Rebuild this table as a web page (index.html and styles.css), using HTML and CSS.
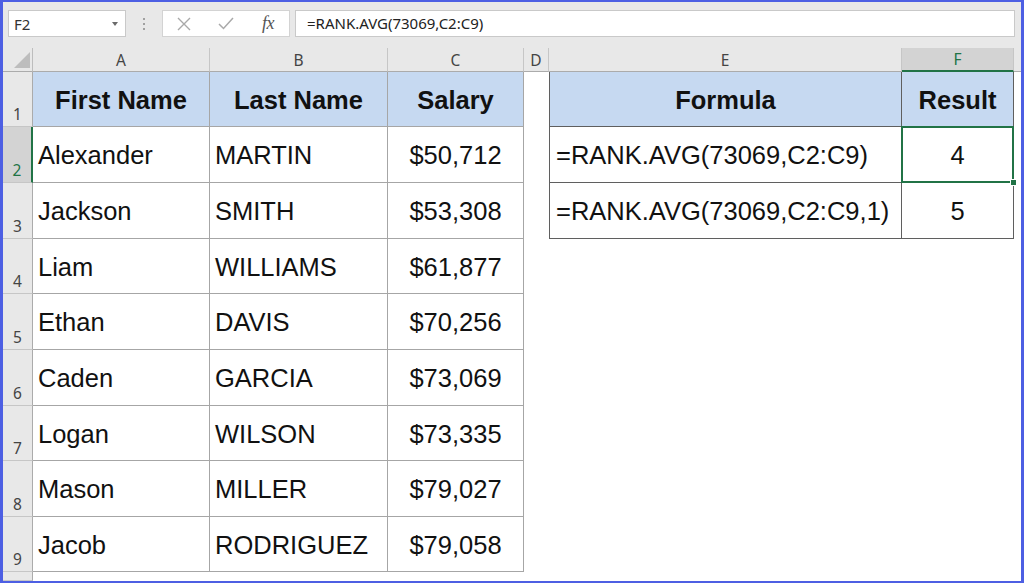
FILE: index.html
```html
<!DOCTYPE html>
<html>
<head>
<meta charset="utf-8">
<link rel="stylesheet" href="styles.css">
</head>
<body>
<div class="frame">
  <div class="toolbar">
    <div class="namebox"><span>F2</span><span class="caret"></span></div>
    <div class="grip"><i></i><i></i><i></i></div>
    <div class="fbuttons">
      <span class="fbtn"><svg width="14" height="14" viewBox="0 0 14 14"><path d="M1 1 L13 13 M13 1 L1 13" stroke="#a9a9a9" stroke-width="1.4" fill="none"/></svg></span>
      <span class="fbtn"><svg width="16" height="13" viewBox="0 0 16 13"><path d="M1 7 L5.5 11.5 L15 1" stroke="#a9a9a9" stroke-width="1.5" fill="none"/></svg></span>
      <span class="fbtn fx">fx</span>
    </div>
    <div class="formula">=RANK.AVG(73069,C2:C9)</div>
  </div>
  <div class="sheet">
    <div class="corner"><svg width="16" height="16" viewBox="0 0 16 16"><path d="M16 0 L16 16 L0 16 Z" fill="#bdbdbd"/></svg></div>
    <div class="colheads">
      <div class="ch">A</div>
      <div class="ch">B</div>
      <div class="ch">C</div>
      <div class="ch">D</div>
      <div class="ch">E</div>
      <div class="ch active">F</div>
      <div class="ch last"></div>
    </div>
    <div class="rowheads">
      <div class="rh">1</div>
      <div class="rh active">2</div>
      <div class="rh">3</div>
      <div class="rh">4</div>
      <div class="rh">5</div>
      <div class="rh">6</div>
      <div class="rh">7</div>
      <div class="rh">8</div>
      <div class="rh">9</div>
      <div class="rh"></div>
    </div>
    <div class="body">
      <div class="tbl tbl-left">
        <div class="cell head">First Name</div>
        <div class="cell head">Last Name</div>
        <div class="cell head">Salary</div>

        <div class="cell">Alexander</div>
        <div class="cell">MARTIN</div>
        <div class="cell num">$50,712</div>

        <div class="cell">Jackson</div>
        <div class="cell">SMITH</div>
        <div class="cell num">$53,308</div>

        <div class="cell">Liam</div>
        <div class="cell">WILLIAMS</div>
        <div class="cell num">$61,877</div>

        <div class="cell">Ethan</div>
        <div class="cell">DAVIS</div>
        <div class="cell num">$70,256</div>

        <div class="cell">Caden</div>
        <div class="cell">GARCIA</div>
        <div class="cell num">$73,069</div>

        <div class="cell">Logan</div>
        <div class="cell">WILSON</div>
        <div class="cell num">$73,335</div>

        <div class="cell">Mason</div>
        <div class="cell">MILLER</div>
        <div class="cell num">$79,027</div>

        <div class="cell">Jacob</div>
        <div class="cell">RODRIGUEZ</div>
        <div class="cell num">$79,058</div>
      </div>
      <div class="tbl tbl-right">
        <div class="cell head">Formula</div>
        <div class="cell head">Result</div>

        <div class="cell fcell">=RANK.AVG(73069,C2:C9)</div>
        <div class="cell num sel">4</div>

        <div class="cell fcell">=RANK.AVG(73069,C2:C9,1)</div>
        <div class="cell num">5</div>
      </div>
    </div>
  </div>
</div>
</body>
</html>
```

FILE: styles.css
```css
html, body {
  margin: 0;
  padding: 0;
  background: #fff;
}

.frame {
  width: 1024px;
  height: 583px;
  box-sizing: border-box;
  border-style: solid;
  border-color: #4d5fe3;
  border-width: 2px 3px;
  background: #fff;
  overflow: hidden;
  display: flex;
  flex-direction: column;
}

/* ---------- toolbar ---------- */
.toolbar {
  height: 46px;
  flex: none;
  box-sizing: border-box;
  background: #e8e8e8;
  display: flex;
  align-items: flex-start;
  padding: 8px 6px 0 5px;
  font-family: "Noto Sans", "Open Sans", sans-serif;
}

.namebox {
  width: 118px;
  height: 27px;
  box-sizing: border-box;
  background: #fff;
  border: 1px solid #c9c9c9;
  display: flex;
  align-items: center;
  justify-content: space-between;
  padding: 0 7px 0 5px;
  font-size: 15px;
  color: #333;
}

.caret {
  width: 0;
  height: 0;
  border-left: 3.5px solid transparent;
  border-right: 3.5px solid transparent;
  border-top: 4px solid #6a6a6a;
}

.grip {
  width: 36px;
  height: 27px;
  display: flex;
  flex-direction: column;
  align-items: center;
  justify-content: center;
  gap: 3px;
}

.grip i {
  display: block;
  width: 2px;
  height: 2px;
  background: #a0a0a0;
}

.fbuttons {
  width: 128px;
  height: 27px;
  box-sizing: border-box;
  background: #fff;
  border: 1px solid #d3d3d3;
  display: flex;
  align-items: center;
}

.fbtn {
  width: 42px;
  display: flex;
  justify-content: center;
  align-items: center;
}

.fx {
  font-family: "Liberation Serif", "DejaVu Serif", serif;
  font-style: italic;
  font-size: 18px;
  color: #555;
  letter-spacing: -0.5px;
}

.formula {
  flex: 1;
  margin-left: 5px;
  height: 27px;
  box-sizing: border-box;
  background: #fff;
  border: 1px solid #c9c9c9;
  padding-left: 11px;
  font-size: 15px;
  line-height: 25px;
  color: #222;
}

/* ---------- sheet ---------- */
.sheet {
  flex: 1;
  display: grid;
  grid-template-columns: 30px 1fr;
  grid-template-rows: 24px 1fr;
  min-height: 0;
}

.corner {
  background: #e8e8e8;
  box-sizing: border-box;
  border-right: 1px solid #bdbdbd;
  border-bottom: 1px solid #ababab;
  display: flex;
  align-items: flex-end;
  justify-content: flex-end;
  padding: 0 2px 3px 0;
}

.colheads {
  display: grid;
  grid-template-columns: 177px 178px 136px 25px 353px 112px 1fr;
  background: #e8e8e8;
}

.ch {
  box-sizing: border-box;
  border-right: 1px solid #c6c6c6;
  border-bottom: 1px solid #ababab;
  display: flex;
  align-items: center;
  justify-content: center;
  font-family: "Noto Sans", "Open Sans", sans-serif;
  font-size: 15.5px;
  color: #444;
}

.ch.active {
  background: #d3d3d3;
  color: #217346;
  border-bottom: 2px solid #217346;
}

.ch.last {
  border-right: none;
}

.rowheads {
  display: grid;
  grid-template-rows: 55px 56px 56px 55px 56px 56px 55px 56px 55px 1fr;
  background: #e8e8e8;
}

.rh {
  box-sizing: border-box;
  border-bottom: 1px solid #c6c6c6;
  border-right: 1px solid #ababab;
  display: flex;
  align-items: flex-end;
  justify-content: center;
  padding-bottom: 1px;
  font-family: "Noto Sans", "Open Sans", sans-serif;
  font-size: 15.5px;
  color: #444;
}

.rh.active {
  background: #d3d3d3;
  color: #217346;
  border-right: 2px solid #217346;
}

.body {
  display: flex;
  align-items: flex-start;
}

.tbl {
  display: grid;
}

.tbl-left {
  grid-template-columns: 177px 178px 136px;
  grid-template-rows: 55px 56px 56px 55px 56px 56px 55px 56px 55px;
}

.tbl-right {
  margin-left: 25px;
  grid-template-columns: 352px 112px;
  grid-template-rows: 55px 56px 56px;
  border-left: 1px solid #5f5f5f;
}

.cell {
  box-sizing: border-box;
  border-right: 1px solid #a6a6a6;
  border-bottom: 1px solid #a6a6a6;
  display: flex;
  align-items: center;
  padding: 2px 0 0 5px;
  font-family: "Liberation Sans", Arial, sans-serif;
  font-size: 25.5px;
  color: #111;
  white-space: nowrap;
}

.tbl-right .cell {
  border-color: #5f5f5f;
}

.head {
  background: #c6d9f1;
  font-weight: bold;
  justify-content: center;
  padding-left: 0;
}

.num {
  justify-content: center;
  padding-left: 0;
}

.fcell {
  padding-left: 6px;
}

.sel {
  position: relative;
}

.sel::after {
  content: "";
  position: absolute;
  left: -1px;
  top: -1px;
  right: -1px;
  bottom: -1px;
  border: 2px solid #217346;
}

.sel::before {
  content: "";
  position: absolute;
  right: -4px;
  bottom: -4px;
  width: 5px;
  height: 5px;
  background: #217346;
  border: 1px solid #fff;
  z-index: 1;
}
```
